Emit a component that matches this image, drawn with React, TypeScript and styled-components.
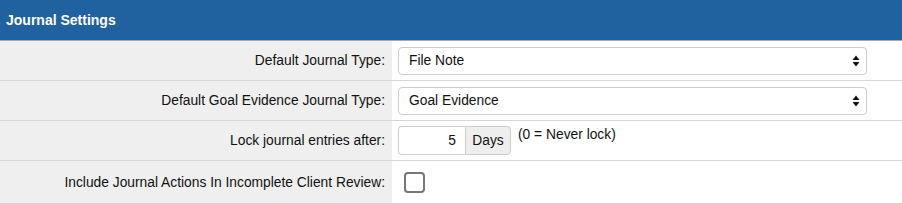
import { FunctionComponent } from 'react';
import styled, { createGlobalStyle } from 'styled-components';

const GlobalStyle = createGlobalStyle`
  body {
    margin: 0;
    background: #ffffff;
    font-family: 'Liberation Sans', Arial, Helvetica, sans-serif;
    font-size: 13.8px;
    color: #111;
  }
`;

const Panel = styled.section`
  width: 902px;
`;

const Header = styled.h2`
  margin: 0;
  height: 40px;
  padding: 0 6px;
  display: flex;
  align-items: center;
  background: #2062a0;
  border-bottom: 1px solid #a8a8a8;
  color: #fff;
  font-size: 14px;
  font-weight: bold;
`;

const Row = styled.div<{ $height: number }>`
  display: grid;
  grid-template-columns: 392px 1fr;
  box-sizing: border-box;
  height: ${(p) => p.$height}px;
  border-bottom: 1px solid #d6d6d6;
  &:last-child {
    border-bottom: none;
  }
`;

const Label = styled.label`
  background: #efefef;
  display: flex;
  align-items: center;
  justify-content: flex-end;
  padding-right: 7px;
  padding-bottom: 1px;
`;

const Field = styled.div`
  display: flex;
  align-items: center;
  padding-left: 6px;
  gap: 7px;
`;

const SelectBox = styled.div`
  width: 469px;
  height: 28px;
  box-sizing: border-box;
  border: 1px solid #cdcdcd;
  border-radius: 4px;
  background: #fff;
  display: flex;
  align-items: center;
  justify-content: space-between;
  padding: 0 6px 0 10px;
`;

const InputGroup = styled.div`
  display: flex;
  height: 29px;
  align-self: flex-start;
  margin-top: 5px;
`;

const NumberInput = styled.div`
  width: 67px;
  box-sizing: border-box;
  border: 1px solid #cdcdcd;
  border-right: none;
  border-radius: 4px 0 0 4px;
  display: flex;
  align-items: center;
  justify-content: flex-end;
  padding-right: 9px;
  background: #fff;
`;

const Addon = styled.div`
  width: 46px;
  box-sizing: border-box;
  border: 1px solid #cdcdcd;
  border-radius: 0 4px 4px 0;
  background: #eeeeee;
  display: flex;
  align-items: center;
  justify-content: center;
`;

const Hint = styled.span`
  align-self: flex-start;
  margin-top: 6px;
`;

const CheckBox = styled.div`
  width: 21px;
  height: 21px;
  box-sizing: border-box;
  margin-left: 6px;
  border: 2px solid #777;
  border-radius: 4px;
  background: #fff;
`;

const Arrows: FunctionComponent = () => (
  <svg width="8" height="12" viewBox="0 0 8 12">
    <path d="M4 0.5 L7.5 5 H0.5 Z" fill="#111" />
    <path d="M4 11.5 L7.5 7 H0.5 Z" fill="#111" />
  </svg>
);

export default function App() {
  return (
    <Panel>
      <GlobalStyle />
      <Header>Journal Settings</Header>
      <Row $height={40}>
        <Label>Default Journal Type:</Label>
        <Field>
          <SelectBox>
            <span>File Note</span>
            <Arrows />
          </SelectBox>
        </Field>
      </Row>
      <Row $height={40}>
        <Label>Default Goal Evidence Journal Type:</Label>
        <Field>
          <SelectBox>
            <span>Goal Evidence</span>
            <Arrows />
          </SelectBox>
        </Field>
      </Row>
      <Row $height={40}>
        <Label>Lock journal entries after:</Label>
        <Field>
          <InputGroup>
            <NumberInput>5</NumberInput>
            <Addon>Days</Addon>
          </InputGroup>
          <Hint>(0 = Never lock)</Hint>
        </Field>
      </Row>
      <Row $height={43}>
        <Label>Include Journal Actions In Incomplete Client Review:</Label>
        <Field>
          <CheckBox />
        </Field>
      </Row>
    </Panel>
  );
}
